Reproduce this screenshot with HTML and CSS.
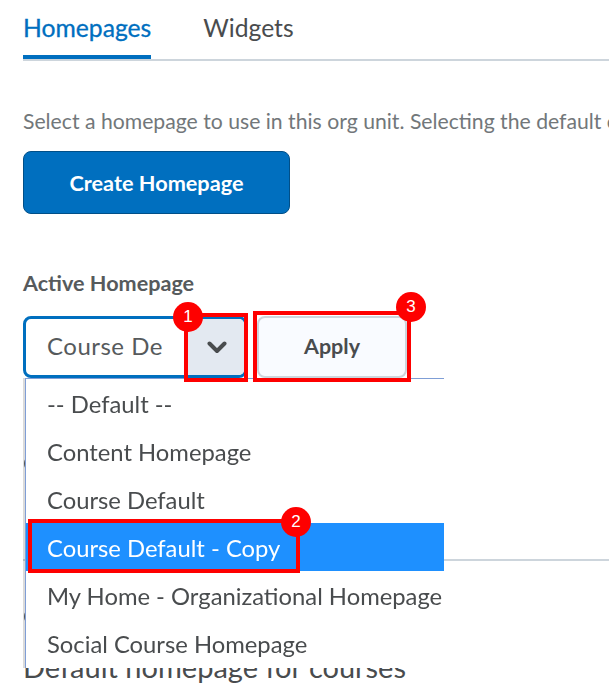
FILE: index.html
```html
<!DOCTYPE html>
<html lang="en">
<head>
<meta charset="utf-8">
<title>Homepages</title>
<link rel="stylesheet" href="styles.css">
</head>
<body>
<main class="page">
  <nav class="tabs">
    <a class="tab tab-active">Homepages</a>
    <a class="tab">Widgets</a>
  </nav>
  <p class="intro">Select a homepage to use in this org unit. Selecting the default option will use the homepage set by the parent.</p>
  <button class="btn-primary">Create Homepage</button>
  <h2 class="label">Active Homepage</h2>
  <div class="controls">
    <div class="select">
      <span class="select-value">Course De</span>
      <span class="select-arrow">
        <svg width="20" height="13" viewBox="0 0 20 13"><path d="M2.5 2.5 10 10l7.5-7.5" fill="none" stroke="#494c4e" stroke-width="4" stroke-linecap="round" stroke-linejoin="round"/></svg>
      </span>
    </div>
    <button class="btn-apply">Apply</button>
  </div>
  <p class="behind behind-first">Changes</p>
  <hr class="rule">
  <p class="behind behind-second">Current</p>
  <p class="desc">Default homepage for courses</p>

  <ul class="menu">
    <li>-- Default --</li>
    <li>Content Homepage</li>
    <li>Course Default</li>
    <li class="selected">Course Default - Copy</li>
    <li>My Home - Organizational Homepage</li>
    <li>Social Course Homepage</li>
  </ul>

  <div class="frame frame-1"></div>
  <div class="frame frame-2"></div>
  <div class="frame frame-3"></div>
  <span class="badge badge-1">1</span>
  <span class="badge badge-2">2</span>
  <span class="badge badge-3">3</span>
</main>
</body>
</html>
```
FILE: styles.css
```css
* { box-sizing: border-box; }
html, body { margin: 0; padding: 0; background: #fff; }
body { font-family: Lato, sans-serif; color: #494c4e; }
.page { position: relative; width: 609px; height: 697px; overflow: hidden; padding-left: 23px; }
.tabs { display: flex; gap: 52px; height: 61px; border-bottom: 2px solid #cdd5dc; }
.tab { font-size: 24.7px; line-height: 30px; padding-top: 13px; height: 59px; }
.tab-active { color: #006fbf; -webkit-text-stroke: 0.3px #006fbf; border-bottom: 4px solid #006fbf; }
.intro { margin: 46px 0 0; font-size: 21.2px; line-height: 28px; color: #72777a; white-space: nowrap; }
.btn-primary { display: block; margin-top: 16px; width: 267px; height: 63px; background: #006fbf; border: 1px solid #004f88; border-radius: 8px; color: #fff; font: 700 21.7px/28px Lato, sans-serif; }
.label { margin: 55px 0 0; font-size: 21.6px; line-height: 28px; font-weight: 700; color: #565a5c; }
.controls { display: flex; gap: 10px; margin-top: 19px; }
.select { display: flex; width: 224px; height: 62px; border: 3px solid #006fbf; border-radius: 8px; overflow: hidden; background: #fff; }
.select-value { flex: 1; padding-left: 21px; font-size: 24px; line-height: 54px; letter-spacing: 0.5px; color: #565a5c; white-space: nowrap; }
.select-arrow { display: flex; align-items: center; justify-content: center; width: 59px; padding-left: 4px; background: #e3e9f1; }
.btn-apply { width: 150px; height: 62px; padding-bottom: 3px; background: #f9fbff; border: 2px solid #cdd5dc; border-radius: 8px; color: #494c4e; font: 700 21.5px/28px Lato, sans-serif; }
.behind { margin: 0; font-size: 24px; line-height: 30px; will-change: transform; }
.behind-first { margin-top: 70px; }
.rule { margin: 81px 0 0; border: 0; border-top: 2px solid #cdd5dc; }
.behind-second { margin-top: 40px; }
.desc { margin: 21px 0 0; font-size: 29px; line-height: 30px; white-space: nowrap; }
.menu { position: absolute; left: 25px; top: 378px; width: 419px; height: 290px; margin: 0; padding: 0; list-style: none; background: #fff; border-top: 1px solid #7f9ed6; border-left: 1px solid #7f9ed6; box-shadow: -2px 0 0 rgba(0, 0, 0, 0.14); }
.menu li { height: 48px; padding-left: 21px; font-size: 23.8px; line-height: 50px; color: #494c4e; white-space: nowrap; }
.menu .selected { background: #1e90ff; color: #fff; }
.frame { position: absolute; border: 4px solid #fe0000; }
.frame-1 { left: 184px; top: 313px; width: 64px; height: 69px; }
.frame-2 { left: 28px; top: 519px; width: 272px; height: 54px; }
.frame-3 { left: 253px; top: 311px; width: 158px; height: 71px; }
.badge { position: absolute; width: 30px; height: 30px; border-radius: 50%; background: #fe0000; color: #fff; font: 400 17px/30px "Liberation Sans", sans-serif; text-align: center; }
.badge-1 { left: 173px; top: 302px; }
.badge-2 { left: 281px; top: 507px; }
.badge-3 { left: 396px; top: 292px; }
```
